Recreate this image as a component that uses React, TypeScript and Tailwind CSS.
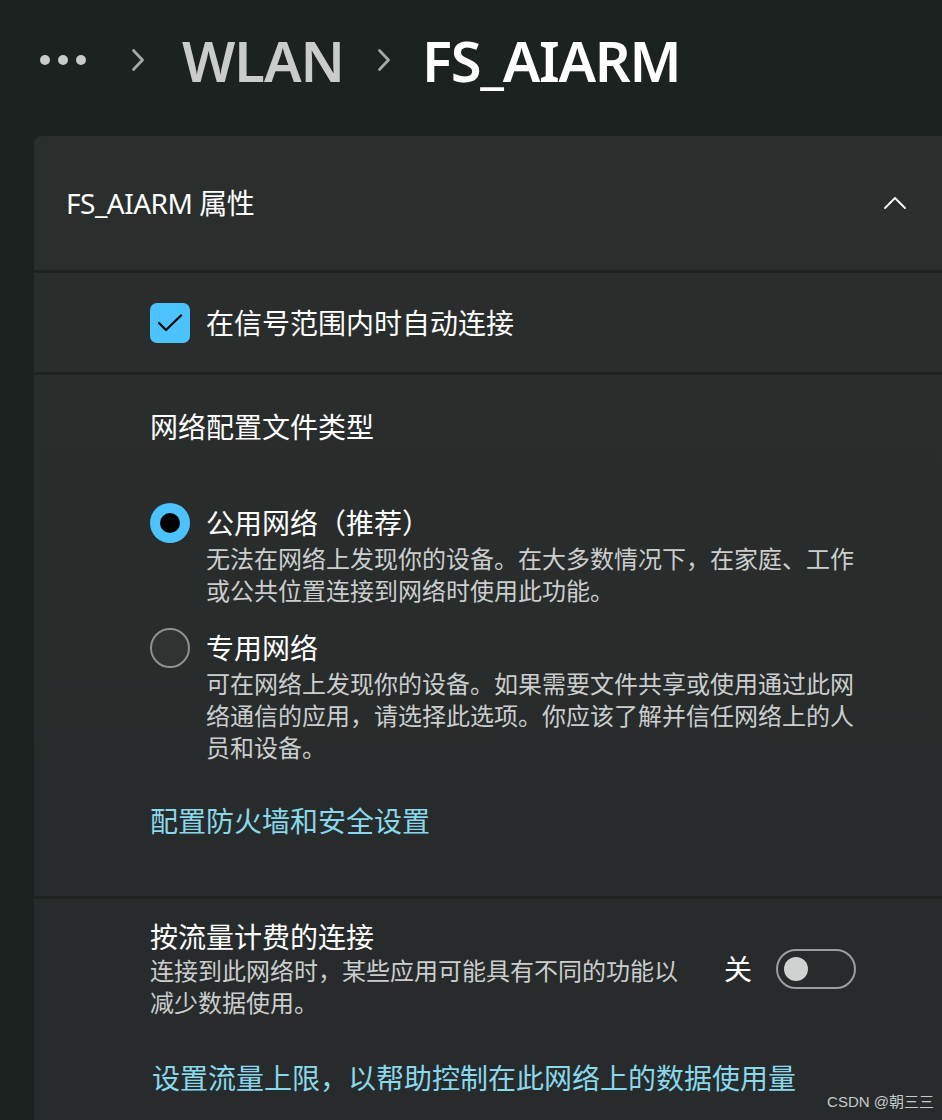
import { useState } from 'react';

const FONT = '"Noto Sans", "Noto Sans CJK SC", sans-serif';

function Chevron({ className = '' }: { className?: string }) {
    return (
        <svg width="14" height="24" viewBox="0 0 14 24" className={className}>
            <path d="M2.5 2.5 L11.5 12 L2.5 21.5" fill="none" stroke="currentColor" strokeWidth="2.8" strokeLinecap="round" strokeLinejoin="round" />
        </svg>
    );
}

function Breadcrumb() {
    return (
        <div className="flex items-center h-[120px] pl-[40px]">
            <div className="flex items-center gap-[8px]">
                <span className="w-[10px] h-[10px] rounded-full bg-[#c9cbca]" />
                <span className="w-[10px] h-[10px] rounded-full bg-[#c9cbca]" />
                <span className="w-[10px] h-[10px] rounded-full bg-[#c9cbca]" />
            </div>
            <Chevron className="ml-[45px] text-[#a4a8a6]" />
            <span className="ml-[37px] text-[56px] font-semibold leading-none text-[#c9cccb] tracking-[-1px]">WLAN</span>
            <Chevron className="ml-[33px] text-[#a4a8a6]" />
            <span className="ml-[31px] text-[56px] font-semibold leading-none text-white tracking-[-1.3px]">FS_AIARM</span>
        </div>
    );
}

function Radio({ checked }: { checked: boolean }) {
    if (checked) {
        return (
            <span className="w-[40px] h-[40px] shrink-0 rounded-full bg-[#4cc2ff] flex items-center justify-center">
                <span className="w-[20px] h-[20px] rounded-full bg-black" />
            </span>
        );
    }
    return <span className="w-[40px] h-[40px] shrink-0 rounded-full border-2 border-[#8e9190] bg-[#2f3332]" />;
}

interface OptionProps {
    checked: boolean;
    title: string;
    description: string;
}

function ProfileOption({ checked, title, description }: OptionProps) {
    return (
        <div className="flex gap-[16px]">
            <div className="h-[40px] flex items-center">
                <Radio checked={checked} />
            </div>
            <div>
                <div className="text-[28px] leading-[40px] text-white">{title}</div>
                <p className="w-[650px] text-[24px] leading-[32px] text-[#cccece]">{description}</p>
            </div>
        </div>
    );
}

export default function App() {
    const [metered] = useState(false);

    return (
        <div className="relative h-[1120px] overflow-hidden bg-[#1c2220]" style={{ fontFamily: FONT }}>
            <Breadcrumb />
            <div className="ml-[34px] mt-[16px] rounded-tl-[8px] overflow-hidden flex flex-col gap-[3px] bg-[#1e2322]">
                {/* header */}
                <div className="h-[134px] flex items-center justify-between pl-[32px] pr-[35px] bg-[#2a2f2d]">
                    <span className="text-[28px] text-white tracking-[-0.5px]">FS_AIARM 属性</span>
                    <svg width="24" height="14" viewBox="0 0 24 14" className="text-white">
                        <path d="M2 12 L12 2 L22 12" fill="none" stroke="currentColor" strokeWidth="1.8" strokeLinecap="round" strokeLinejoin="round" />
                    </svg>
                </div>

                {/* auto connect */}
                <div className="h-[99px] flex items-center gap-[16px] pl-[116px] bg-[#292e2c]">
                    <span className="w-[40px] h-[40px] rounded-[7px] bg-[#4cc2ff] flex items-center justify-center">
                        <svg width="26" height="20" viewBox="0 0 26 20">
                            <path d="M2 10 L9 17 L24 2.5" fill="none" stroke="#000" strokeWidth="2.2" strokeLinecap="round" strokeLinejoin="round" />
                        </svg>
                    </span>
                    <span className="text-[28px] text-white">在信号范围内时自动连接</span>
                </div>

                {/* network profile */}
                <div className="pl-[116px] pt-[32px] pb-[55px] bg-gradient-to-b from-[#292d2c] to-[#272b2b]">
                    <div className="text-[28px] leading-[40px] text-white">网络配置文件类型</div>
                    <div className="mt-[56px] flex flex-col gap-[21px]">
                        <ProfileOption
                            checked
                            title="公用网络（推荐）"
                            description="无法在网络上发现你的设备。在大多数情况下，在家庭、工作或公共位置连接到网络时使用此功能。"
                        />
                        <ProfileOption
                            checked={false}
                            title="专用网络"
                            description="可在网络上发现你的设备。如果需要文件共享或使用通过此网络通信的应用，请选择此选项。你应该了解并信任网络上的人员和设备。"
                        />
                    </div>
                    <div className="mt-[37px] text-[28px] leading-[40px] text-[#8ad8ec]">配置防火墙和安全设置</div>
                </div>

                {/* metered connection */}
                <div className="pl-[116px] pt-[20px] h-[240px] bg-[#272b2b]">
                    <div className="flex items-center">
                        <div className="w-[574px]">
                            <div className="text-[28px] leading-[36px] text-white">按流量计费的连接</div>
                            <p className="w-[530px] text-[24px] leading-[32px] text-[#cccece]">
                                连接到此网络时，某些应用可能具有不同的功能以减少数据使用。
                            </p>
                        </div>
                        <span className="text-[28px] text-white">关</span>
                        <span className="ml-[24px] w-[80px] h-[40px] rounded-full border-2 border-[#9b9e9d] flex items-center pl-[6px]">
                            <span className={`w-[24px] h-[24px] rounded-full ${metered ? 'bg-white' : 'bg-[#d0d2d1]'}`} />
                        </span>
                    </div>
                    <div className="mt-[39px] pl-[2px] text-[28px] leading-[40px] text-[#8ad8ec]">
                        设置流量上限，以帮助控制在此网络上的数据使用量
                    </div>
                </div>
            </div>
            <span
                className="absolute right-[8px] bottom-[7px] text-[15px] text-[#c6cac9]"
                style={{ fontFamily: '"Liberation Sans", "Noto Sans CJK SC", sans-serif' }}
            >
                CSDN @朝三三
            </span>
        </div>
    );
}
